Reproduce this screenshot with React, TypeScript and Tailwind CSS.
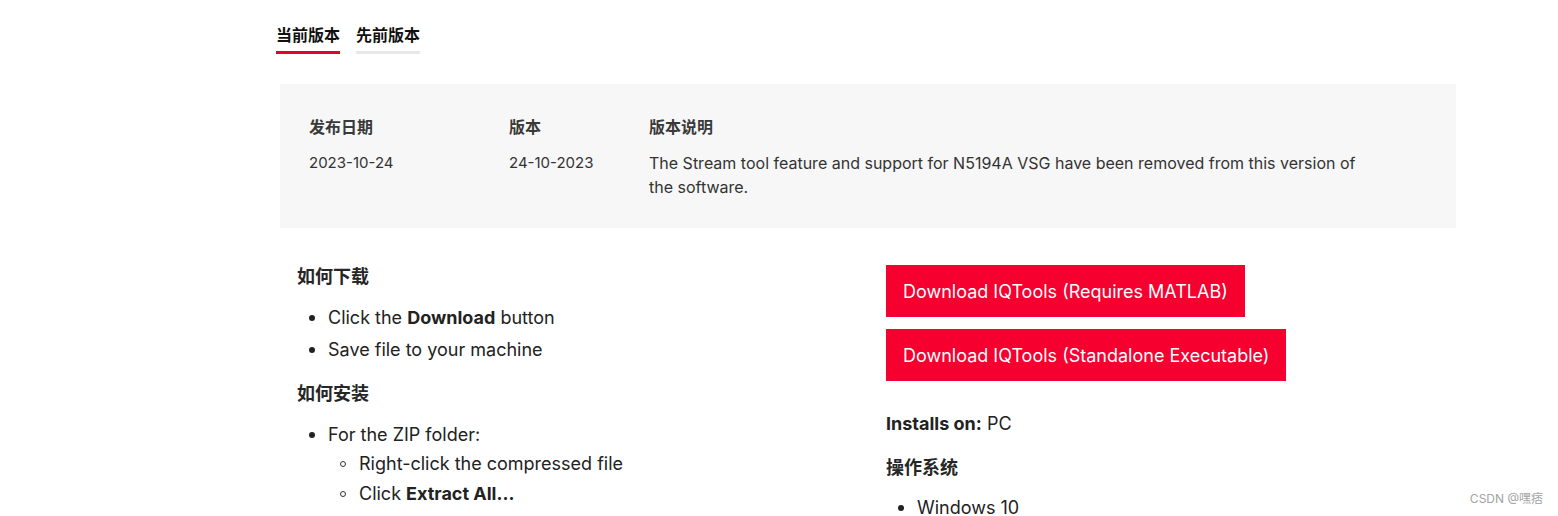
const font = "font-['Inter','Noto_Sans_CJK_SC',sans-serif]";

function Tabs() {
  return (
    <div className="flex gap-4 pl-[276px] pt-[24px]">
      <div className="flex w-16 flex-col items-center">
        <span className="text-[16px] font-bold leading-[22px] text-[#111]">当前版本</span>
        <div className="mt-[5px] h-[3px] w-16 bg-[#e90029]" />
      </div>
      <div className="flex w-16 flex-col items-center">
        <span className="text-[16px] font-bold leading-[22px] text-[#111]">先前版本</span>
        <div className="mt-[5px] h-[3px] w-16 bg-[#e8e8e8]" />
      </div>
    </div>
  );
}

function ReleaseTable() {
  return (
    <div className="ml-[280px] mt-[30px] h-[144px] w-[1176px] bg-[#f7f7f7] pl-[29px] pt-[32px] text-[15px] text-[#333]">
      <div className="flex">
        <div className="w-[200px]">
          <div className="text-[16px] font-bold leading-[22px] text-[#3a3a3a]">发布日期</div>
          <div className="mt-[13px] leading-[24px]">2023-10-24</div>
        </div>
        <div className="w-[140px]">
          <div className="text-[16px] font-bold leading-[22px] text-[#3a3a3a]">版本</div>
          <div className="mt-[13px] leading-[24px]">24-10-2023</div>
        </div>
        <div className="w-[722px]">
          <div className="text-[16px] font-bold leading-[22px] text-[#3a3a3a]">版本说明</div>
          <div className="mt-[13px] text-[16px] leading-[24px]">
            The Stream tool feature and support for N5194A VSG have been removed from this version of the software.
          </div>
        </div>
      </div>
    </div>
  );
}

function Bullet({ children, hollow }: { children: React.ReactNode; hollow?: boolean }) {
  return (
    <li className="flex items-center">
      <span className="flex w-[31px] justify-center pr-[2px]">
        {hollow ? (
          <span className="h-[6px] w-[6px] rounded-full border border-[#333]" />
        ) : (
          <span className="h-[6px] w-[6px] rounded-full bg-[#222]" />
        )}
      </span>
      <span>{children}</span>
    </li>
  );
}

function HowTo() {
  return (
    <div className="w-[606px] pl-[17px] text-[18px] text-[#222]">
      <h3 className="text-[18px] font-bold leading-[24px] text-[#262626]">如何下载</h3>
      <ul className="mt-[17px] space-y-[8px] leading-[24px]">
        <Bullet>
          Click the <b>Download</b> button
        </Bullet>
        <Bullet>Save file to your machine</Bullet>
      </ul>
      <h3 className="mt-[20px] text-[18px] font-bold leading-[24px] text-[#262626]">如何安装</h3>
      <ul className="mt-[17px] leading-[24px]">
        <Bullet>For the ZIP folder:</Bullet>
        <li className="pl-[31px]">
          <ul className="mt-[5px] space-y-[6px]">
            <Bullet hollow>Right-click the compressed file</Bullet>
            <Bullet hollow>
              Click <b>Extract All...</b>
            </Bullet>
          </ul>
        </li>
      </ul>
    </div>
  );
}

function Downloads() {
  return (
    <div className="flex flex-col items-start text-[18px] text-[#222]">
      <button className="h-[52px] bg-[#f5002f] px-[17px] text-white">Download IQTools (Requires MATLAB)</button>
      <button className="mt-[12px] h-[52px] bg-[#f5002f] px-[17px] text-white">
        Download IQTools (Standalone Executable)
      </button>
      <div className="mt-[31px] leading-[24px]">
        <b>Installs on:</b> PC
      </div>
      <h3 className="mt-[20px] text-[18px] font-bold leading-[24px] text-[#262626]">操作系统</h3>
      <ul className="mt-[16px] leading-[24px]">
        <Bullet>Windows 10</Bullet>
      </ul>
    </div>
  );
}

export default function App() {
  return (
    <div className={`relative h-[516px] w-[1558px] overflow-hidden bg-white ${font}`}>
      <Tabs />
      <ReleaseTable />
      <div className="mt-[37px] flex pl-[280px]">
        <HowTo />
        <Downloads />
      </div>
      <div className="absolute bottom-[8px] right-[15px] text-[12px] text-[#a3a3a3]">CSDN @嘿痞</div>
    </div>
  );
}
